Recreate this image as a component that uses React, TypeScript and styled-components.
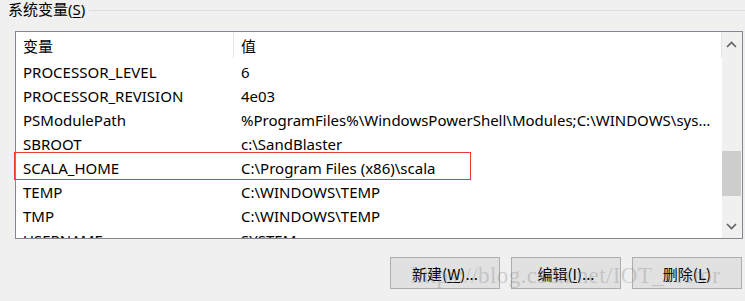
import React from "react";
import styled, { createGlobalStyle } from "styled-components";

const Global = createGlobalStyle`
  html, body { margin: 0; padding: 0; background: #f0f0f0; }
  body { font-family: "Noto Sans", "Noto Sans CJK SC", sans-serif; }
`;

const Page = styled.div`
  position: relative;
  width: 745px;
  height: 301px;
  overflow: hidden;
  background: #f0f0f0;
  color: #000;
  font-family: "Noto Sans", "Noto Sans CJK SC", sans-serif;
  font-size: 15px;
`;

const GroupHeader = styled.div`
  display: flex;
  align-items: center;
  height: 19px;
  padding-left: 8px;
  gap: 4px;
`;

const GroupTitle = styled.span`
  font-size: 15px;
  line-height: 19px;
  white-space: nowrap;
  u { text-decoration: underline; text-underline-offset: 2px; }
`;

const GroupLine = styled.div`
  flex: 1;
  height: 1px;
  background: #dcdcdc;
  margin-top: 1px;
`;

const ListBox = styled.div`
  margin: 12px 2px 0 15px;
  height: 206px;
  border: 1px solid #828790;
  background: #fff;
  display: grid;
  grid-template-columns: 1fr 20px;
  overflow: hidden;
`;

const Table = styled.div`
  display: flex;
  flex-direction: column;
  overflow: hidden;
`;

const HeaderRow = styled.div`
  display: grid;
  grid-template-columns: 218px 1fr;
  height: 28px;
  flex: none;
`;

const HeaderCell = styled.div`
  display: flex;
  align-items: center;
  padding-left: 7px;
  border-right: 1px solid #e5e5e5;
  margin-bottom: 2px;
  font-family: "Noto Sans CJK SC", sans-serif;
  font-size: 15px;
`;

const Row = styled.div`
  display: grid;
  grid-template-columns: 218px 1fr;
  height: 24px;
  flex: none;
  align-items: center;
`;

const Cell = styled.div`
  padding-left: 7px;
  padding-right: 8px;
  white-space: nowrap;
  overflow: hidden;
  text-overflow: ellipsis;
  line-height: 24px;
`;

const ScrollBar = styled.div`
  background: #f0f0f0;
  display: flex;
  flex-direction: column;
  align-items: stretch;
  padding-right: 1px;
`;

const ArrowBtn = styled.div`
  height: 24px;
  display: flex;
  align-items: center;
  justify-content: center;
  flex: none;
`;

const Track = styled.div`
  flex: 1;
  position: relative;
`;

const Thumb = styled.div`
  position: absolute;
  left: 0;
  right: 0;
  top: 95px;
  height: 45px;
  background: #cdcdcd;
`;

const ButtonRow = styled.div`
  display: flex;
  justify-content: flex-end;
  gap: 11px;
  margin-top: 18px;
  padding-right: 3px;
`;

const Button = styled.div`
  width: 108px;
  height: 30px;
  border: 1px solid #adadad;
  background: #e1e1e1;
  display: flex;
  align-items: center;
  justify-content: center;
  font-family: "Noto Sans CJK SC", sans-serif;
  font-size: 15px;
  u { text-decoration: underline; text-underline-offset: 2px; }
`;

const Highlight = styled.div`
  position: absolute;
  left: 14px;
  top: 152px;
  width: 455px;
  height: 26px;
  border: 1px solid #e8392f;
  pointer-events: none;
`;

const Watermark = styled.div`
  position: absolute;
  left: 411px;
  top: 263px;
  font-family: "Liberation Serif", serif;
  font-size: 23px;
  letter-spacing: 0.4px;
  color: rgba(130, 130, 130, 0.33);
  white-space: nowrap;
  pointer-events: none;
`;

const rows: [string, string][] = [
  ["PROCESSOR_LEVEL", "6"],
  ["PROCESSOR_REVISION", "4e03"],
  ["PSModulePath", "%ProgramFiles%\\WindowsPowerShell\\Modules;C:\\WINDOWS\\system32\\WindowsPowerShell\\v1.0\\Modules"],
  ["SBROOT", "c:\\SandBlaster"],
  ["SCALA_HOME", "C:\\Program Files (x86)\\scala"],
  ["TEMP", "C:\\WINDOWS\\TEMP"],
  ["TMP", "C:\\WINDOWS\\TEMP"],
  ["USERNAME", "SYSTEM"],
];

const Chevron = ({ up }: { up?: boolean }) => (
  <svg width="11" height="7" viewBox="0 0 11 7">
    <path
      d={up ? "M1 6 L5.5 1.5 L10 6" : "M1 1 L5.5 5.5 L10 1"}
      fill="none"
      stroke="#606060"
      strokeWidth="1.6"
    />
  </svg>
);

export default function App() {
  return (
    <Page>
      <Global />
      <GroupHeader>
        <GroupTitle>
          系统变量(<u>S</u>)
        </GroupTitle>
        <GroupLine />
      </GroupHeader>
      <ListBox>
        <Table>
          <HeaderRow>
            <HeaderCell>变量</HeaderCell>
            <HeaderCell>值</HeaderCell>
          </HeaderRow>
          {rows.map(([k, v]) => (
            <Row key={k}>
              <Cell>{k}</Cell>
              <Cell>{v}</Cell>
            </Row>
          ))}
        </Table>
        <ScrollBar>
          <ArrowBtn>
            <Chevron up />
          </ArrowBtn>
          <Track>
            <Thumb />
          </Track>
          <ArrowBtn>
            <Chevron />
          </ArrowBtn>
        </ScrollBar>
      </ListBox>
      <ButtonRow>
        <Button>
          新建(<u>W</u>)...
        </Button>
        <Button>
          编辑(<u>I</u>)...
        </Button>
        <Button>
          删除(<u>L</u>)
        </Button>
      </ButtonRow>
      <Highlight />
      <Watermark>https://blog.csdn.net/IOT_victor</Watermark>
    </Page>
  );
}
